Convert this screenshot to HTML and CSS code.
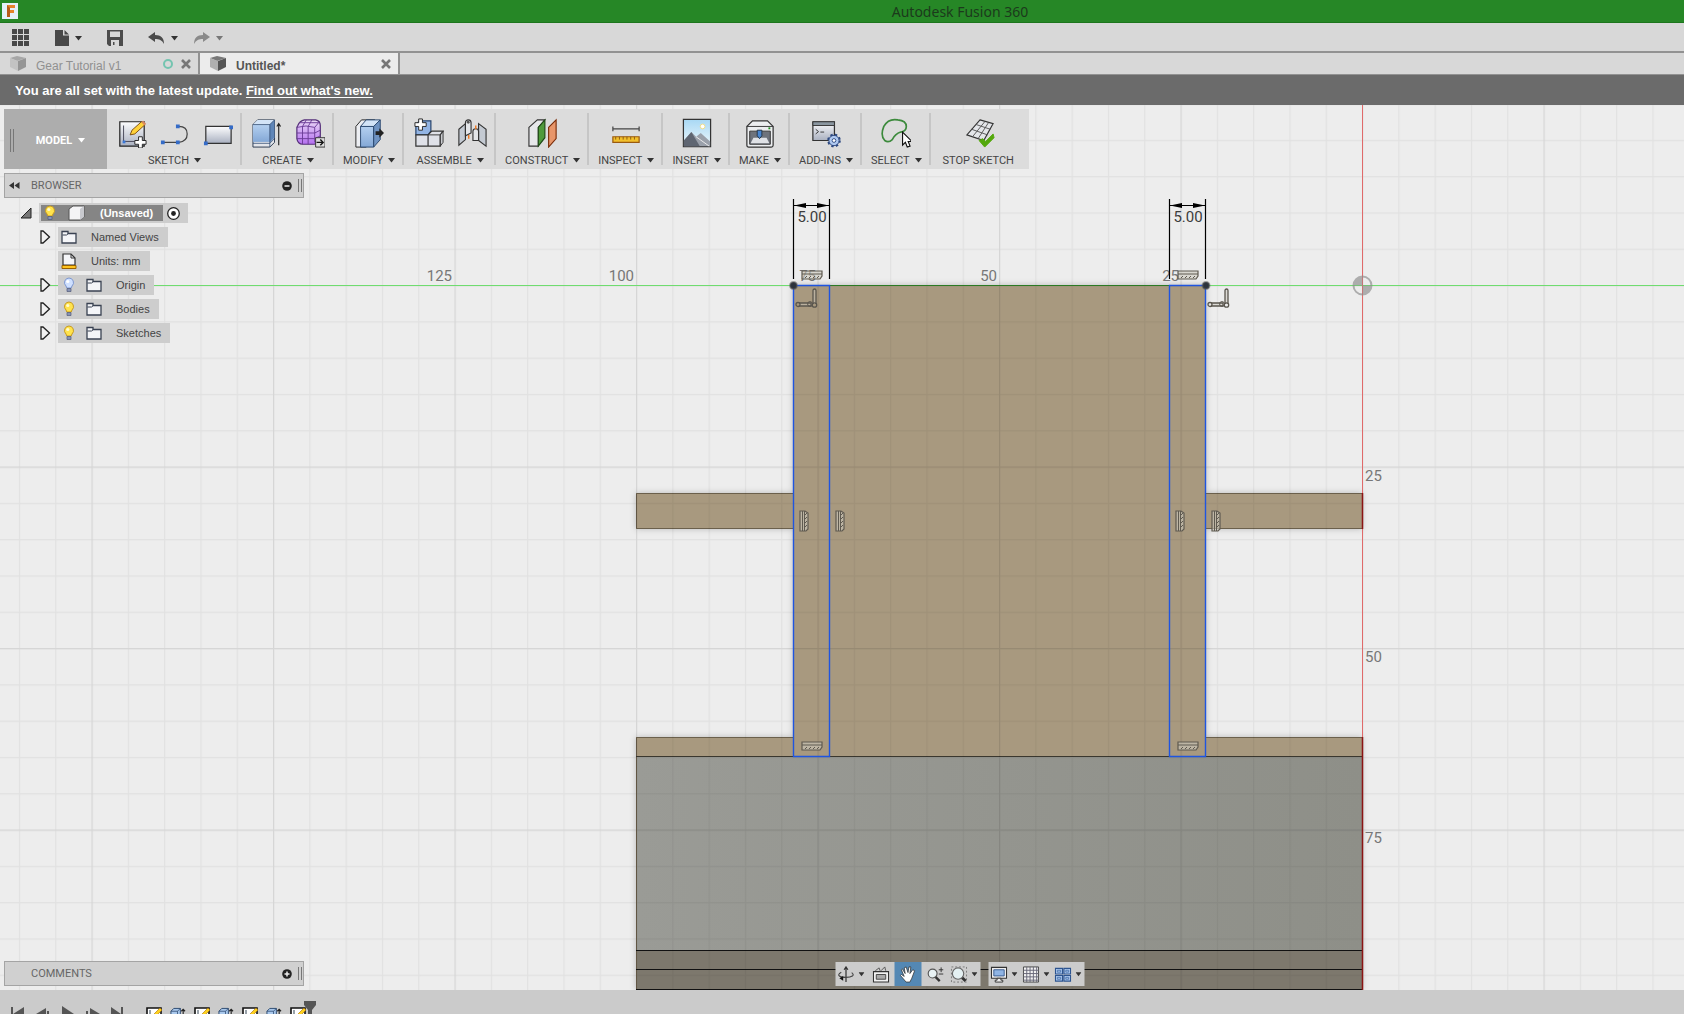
FILE: index.html
```
<!DOCTYPE html>
<html lang="en">
<head>
<meta charset="utf-8">
<title>Autodesk Fusion 360</title>
<link rel="stylesheet" href="styles.css">
</head>
<body>
<svg class="defs" aria-hidden="true">
  <defs>
    <linearGradient id="g-paper" x1="0" y1="0" x2="0" y2="1"><stop offset="0" stop-color="#fdfdfe"/><stop offset="1" stop-color="#a9b0c0"/></linearGradient>
    <linearGradient id="g-blue" x1="0" y1="0" x2="0" y2="1"><stop offset="0" stop-color="#b4d0f0"/><stop offset="1" stop-color="#84a8d6"/></linearGradient>
    <linearGradient id="g-purple" x1="0" y1="0" x2="0" y2="1"><stop offset="0" stop-color="#ead8f6"/><stop offset="1" stop-color="#b46ff0"/></linearGradient>
    <linearGradient id="g-sky" x1="0" y1="0" x2="0" y2="1"><stop offset="0" stop-color="#a8d8f4"/><stop offset="1" stop-color="#eef8fc"/></linearGradient>
    <linearGradient id="g-steel" x1="0" y1="0" x2="1" y2="0"><stop offset="0" stop-color="#9a9b96"/><stop offset="1" stop-color="#8e8f88"/></linearGradient>
    <symbol id="caret" viewBox="0 0 7 5"><path d="M0 0h7L3.5 4.5z" fill="currentColor"/></symbol>
    <symbol id="cube" viewBox="0 0 18 18"><path d="M1 3l7-2 9 2-9 3z" fill="#777"/><path d="M1 3l8 3v10l-8-4z" fill="#b0b0b0"/><path d="M9 6l8-3v9l-8 4z" fill="#555"/></symbol>
    <symbol id="close" viewBox="0 0 10 10"><path d="M1 1l8 8M9 1l-8 8" stroke="#777" stroke-width="2.6"/></symbol>
    <symbol id="folder" viewBox="0 0 16 14"><path d="M1 1.5h6v2h8v9.500h-14z" fill="#f4f5f8" stroke="#3a4252" stroke-width="1.3"/><path d="M1.500 5h4l2-1.500" fill="none" stroke="#3a4252"/></symbol>
    <symbol id="bulb-on" viewBox="0 0 12 16"><path d="M6 1a4.600 4.600 0 0 1 3 8l-.8 2H3.800L3 9A4.600 4.600 0 0 1 6 1z" fill="#ffe34d" stroke="#c79a22"/><circle cx="4.800" cy="4.500" r="1.600" fill="#fffbd0"/><path d="M4 11.500h4v3H4z" fill="#8793b5" stroke="#505a78" stroke-width=".7"/></symbol>
    <symbol id="bulb-off" viewBox="0 0 12 16"><path d="M6 1a4.600 4.600 0 0 1 3 8l-.8 2H3.800L3 9A4.600 4.600 0 0 1 6 1z" fill="#cfe0ff" stroke="#7d97cf"/><circle cx="4.800" cy="4.500" r="1.600" fill="#fff"/><path d="M4 11.500h4v3H4z" fill="#8793b5" stroke="#505a78" stroke-width=".7"/></symbol>
    <symbol id="expand" viewBox="0 0 11 14"><path d="M1 1h2l6.500 6L3 13H1z" fill="#f2f2f2" stroke="#222" stroke-width="1.300"/></symbol>
    <symbol id="tl-sketch" viewBox="0 0 16 16"><path d="M1 1h14v14H1z" fill="#fff" stroke="#111" stroke-width="1.600"/><path d="M4 3v9h9" fill="none" stroke="#345"/><path d="M6 11l1-3 7-7 2 2-7 7z" fill="#ffd21e" stroke="#a66a00" stroke-width=".6"/></symbol>
    <symbol id="tl-extrude" viewBox="0 0 17 16"><path d="M1 4l3-3h7v11l-3 3H1z" fill="#a9c8ec" stroke="#29466e"/><path d="M1 4h7v11M8 4l3-3" fill="none" stroke="#29466e" stroke-width=".8"/><path d="M14 14V2M12 4l2-2 2 2" fill="none" stroke="#222" stroke-width="1.200"/></symbol>
    <symbol id="fix-h" viewBox="0 0 22 10"><path d="M1 1h20v5l-2 3H1z" fill="#ccc8bd" fill-opacity=".6" stroke="#5f5a50" stroke-width="1.200"/><path d="M1 4h20M4 8l2-2M8 8l2-2M12 8l2-2M16 8l2-2" fill="none" stroke="#5f5a50"/></symbol>
    <symbol id="fix-v" viewBox="0 0 10 22"><path d="M1 1h5l3 2v16l-2 2H1z" fill="#ccc8bd" fill-opacity=".6" stroke="#5f5a50" stroke-width="1.200"/><path d="M3.500 1v20M5.500 1v20M6 5l2-2M6 9l2-2M6 13l2-2M6 17l2-2" fill="none" stroke="#5f5a50"/></symbol>
    <symbol id="perp" viewBox="0 0 23 20"><path d="M18 16V2.500a1.500 1.500 0 0 1 3 0v13.500M4 15h12v3H4" fill="#ccc8bd" fill-opacity=".5" stroke="#5a564e" stroke-width="1.300"/><circle cx="3" cy="16.500" r="2" fill="none" stroke="#5a564e" stroke-width="1.300"/><circle cx="15" cy="16" r="2.400" fill="none" stroke="#5a564e"/><circle cx="19.500" cy="17" r="2.200" fill="none" stroke="#5a564e" stroke-width="1.300"/></symbol>
    <symbol id="dim" viewBox="0 0 40 84"><path d="M1.500 1v80M37.500 1v80M2 7.500h36" stroke="#000" stroke-width="1.200" fill="none"/><path d="M2 7.500l12-2.500v5zM37 7.500L25 5v5z"/></symbol>
  </defs>
</svg>

<header class="titlebar">
  <svg class="logo" viewBox="0 0 16 16"><path d="M0 0h16v16H0z" fill="#e4f0f8"/><path d="M5 2h8v3H8v2h4v3H8v4H5z" fill="#e5842a"/><path d="M5 2l3 3v9H5z" fill="#b85a18"/></svg>
  <h1>Autodesk Fusion 360</h1>
</header>

<div class="quickbar">
  <button aria-label="Data panel"><svg width="18" height="18" viewBox="0 0 18 18" fill="#484848"><path d="M0 0h5v5H0zM6 0h5v5H6zM12 0h5v5h-5zM0 6h5v5H0zM6 6h5v5H6zM12 6h5v5h-5zM0 12h5v5H0zM6 12h5v5H6zM12 12h5v5h-5z"/></svg></button>
  <button aria-label="File"><svg width="14" height="16" viewBox="0 0 14 16" fill="#484848"><path d="M0 0h8v5.500h6V16H0zM9.500 0L14 4.500H9.500z"/></svg><svg class="caret"><use href="#caret"/></svg></button>
  <button aria-label="Save"><svg width="16" height="16" viewBox="0 0 16 16"><path d="M0 0h16v16H2l-2-2z" fill="#4c4c4c"/><path d="M3 1.500h10V7H3zM4 10h8v6H4z" fill="#d8d8d8"/><path d="M6 12h1.500v3H6z" fill="#4c4c4c"/></svg></button>
  <span class="history">
    <button aria-label="Undo"><svg width="17" height="13" viewBox="0 0 17 13"><path d="M0 5l7-5v3c6 0 9 3 9 9-2-4-5-5-9-5v3z" fill="#4c4c4c"/></svg><svg class="caret"><use href="#caret"/></svg></button>
    <button class="dim" aria-label="Redo"><svg width="17" height="13" viewBox="0 0 17 13"><path d="M17 5l-7-5v3C4 3 1 6 1 12c2-4 5-5 9-5v3z" fill="#8a8a8a"/></svg><svg class="caret"><use href="#caret"/></svg></button>
  </span>
</div>

<nav class="tabs">
  <div class="tab faded"><svg class="cube"><use href="#cube"/></svg><a href="#gear">Gear Tutorial v1</a><i class="ring"></i><button aria-label="Close Gear Tutorial"><svg width="10" height="10"><use href="#close"/></svg></button></div>
  <div class="tab active"><svg class="cube"><use href="#cube"/></svg><a href="#untitled">Untitled*</a><button aria-label="Close Untitled"><svg width="10" height="10"><use href="#close"/></svg></button></div>
</nav>

<p class="banner">You are all set with the latest update. <a href="#new">Find out what's new.</a></p>

<main class="canvas">
  <svg class="drawing" viewBox="0 105 1684 885" preserveAspectRatio="xMidYMid slice" role="img" aria-label="Sketch view">
    <defs>
      <pattern id="minor" x="1362" y="285" width="36.300" height="36.300" patternUnits="userSpaceOnUse"><path d="M0 0h36.300v1.200H1.200v35.100H0z" fill="#000" fill-opacity=".05"/></pattern>
      <pattern id="major" x="1362" y="285" width="181.500" height="181.500" patternUnits="userSpaceOnUse"><path d="M0 0h181.500v1.200H1.200v180.300H0z" fill="#000" fill-opacity=".05"/></pattern>
      <filter id="soft" x="-5%" y="-10%" width="110%" height="120%"><feDropShadow dx="0" dy="0" stdDeviation="3" flood-opacity=".22"/></filter>
    </defs>
    <path d="M0 105h1684v885H0z" fill="#ededed"/>
    <g filter="url(#soft)">
      <path d="M636 493h726v36H636zM636 737h726v20H636zM793 285h413v471H793z" fill="#a8997f"/>
      <path d="M636 756h726v194H636z" fill="url(#g-steel)"/>
      <path d="M636 950h726v40H636z" fill="#7d786d"/>
    </g>
    <g fill="none" stroke="#6b604c">
      <path d="M793 493.500H636.500v35H793M1206 493.500h156M1206 528.500h156M793 737.500H636.500V990M1206 737.500h156"/>
      <path d="M636 756.500h726" stroke="#3a372e"/>
      <path d="M636 950.500h726M636 969.500h726M636 989.500h726" stroke="#111"/>
    </g>
    <path d="M0 105h1684v885H0z" fill="url(#minor)"/>
    <path d="M0 105h1684v885H0z" fill="url(#major)"/>
    <path d="M0 285.500h1684" stroke="#6fdc6f"/>
    <path d="M794 285.500h412" stroke="#2c7a24"/>
    <path d="M1362.500 105v885" stroke="#e06a6a"/>
    <path d="M1362.500 493v36M1362.500 737v253" stroke="#8c1414" stroke-width="1.500"/>
    <g fill="none" stroke="#1f55e0" stroke-width="1.400"><path d="M793.500 285.500h36v471h-36zM1169.500 285.500h36v471h-36z"/></g>
    <g class="axis" text-anchor="end"><text x="452" y="281">125</text><text x="634" y="281">100</text><text x="816" y="281">75</text><text x="997" y="281">50</text><text x="1179" y="281">25</text></g>
    <g class="axis"><text x="1365" y="481">25</text><text x="1365" y="662">50</text><text x="1365" y="843">75</text></g>
    <use href="#dim" x="792" y="198" width="40" height="84"/><use href="#dim" x="1168" y="198" width="40" height="84"/>
    <g class="measure" text-anchor="middle"><text x="812" y="222">5.00</text><text x="1188" y="222">5.00</text></g>
    <g><use href="#fix-h" x="801" y="270" width="22" height="10"/><use href="#fix-h" x="1177" y="270" width="22" height="10"/><use href="#fix-h" x="801" y="741" width="22" height="10"/><use href="#fix-h" x="1177" y="741" width="22" height="10"/>
    <use href="#fix-v" x="799" y="510" width="10" height="22"/><use href="#fix-v" x="835" y="510" width="10" height="22"/><use href="#fix-v" x="1175" y="510" width="10" height="22"/><use href="#fix-v" x="1211" y="510" width="10" height="22"/>
    <use href="#perp" x="795" y="288" width="23" height="20"/><use href="#perp" x="1207" y="288" width="23" height="20"/></g>
    <g fill="#2c323c" stroke="#555" stroke-opacity=".5" stroke-width="2"><circle cx="793.500" cy="285.500" r="3.500"/><circle cx="1206" cy="285.500" r="3.500"/></g>
    <g fill="#8c8c8c" opacity=".65"><circle cx="1362.500" cy="285.500" r="9" fill="none" stroke="#8c8c8c" stroke-width="2"/><path d="M1362.500 285.500v-9a9 9 0 0 0-9 9zM1362.500 285.500v9a9 9 0 0 0 9-9z"/></g>
  </svg>

  <div class="overlay">
    <div class="toolbar">
      <button class="workspace"><i class="grip"></i><span>MODEL <svg class="caret"><use href="#caret"/></svg></span></button>
      <section class="group">
        <div class="icons">
          <button aria-label="Create sketch"><svg viewBox="0 0 32 32"><path d="M3 4h26v26H3z" fill="url(#g-paper)" stroke="#222" stroke-width="1.300"/><path d="M7 8v17h12" fill="none" stroke="#445"/><path d="M6 24h3v3H6z" fill="#3a78d8"/><path d="M14 18l2-5L26 4l4 3-11 10z" fill="#ffd23a" stroke="#7a4a10"/><path d="M26 4l2-1 3 3-2 2z" fill="#d88860"/><path d="M23 20h4v4h4v4h-4v4h-4v-4h-4v-4h4z" fill="#fff" stroke="#222"/></svg></button>
          <button aria-label="Line"><svg viewBox="0 0 32 32"><path d="M3 26h17q9-1 9-9t-9-8" fill="none" stroke="#444" stroke-width="1.300"/><path d="M1 24h4v4H1zM17 24h4v4h-4zM17 7h4v4h-4z" fill="#356cc8"/></svg></button>
          <button aria-label="Rectangle"><svg viewBox="0 0 32 32"><path d="M3 9h27v18H3z" fill="url(#g-paper)" stroke="#333" stroke-width="1.300"/><path d="M1 25h4v4H1zM28 8h4v4h-4z" fill="#356cc8"/></svg></button>
        </div>
        <button class="label">SKETCH <svg class="caret"><use href="#caret"/></svg></button>
      </section>
      <section class="group">
        <div class="icons">
          <button aria-label="Extrude"><svg viewBox="0 0 32 32"><path d="M1 7l5-5h18v24l-5 5H1z" fill="#e3e5ea" stroke="#29384e"/><path d="M1 7h18v18.500H1z" fill="url(#g-blue)"/><path d="M1 7l5-5h18l-5 5z" fill="#d3e4f7"/><path d="M19 7l5-5v19l-5 5z" fill="#5f86b8"/><path d="M1 7h18v24M1 27h18l5-5M19 7l5-5" fill="none" stroke="#29466e" stroke-width=".8"/><path d="M28.500 29V6M26.500 9l2-3 2 3" fill="none" stroke="#222" stroke-width="1.200"/></svg></button>
          <button aria-label="Form"><svg viewBox="0 0 32 32"><path d="M3 8q2-5 7-6h12q5 1 5 6v13q-1 7-7 7H8q-5 0-6-6V10z" fill="url(#g-purple)" stroke="#56307a" stroke-width="1.300"/><path d="M2 10q10-3 19 0M2 16h19l6-3M2 22h19l6-3M8 28V9l4-7M14 28V9l4-7M21 26V10l5-6M5 5h20" fill="none" stroke="#6b3c96"/><path d="M22 21h10v10H22z" fill="#ddd" stroke="#333"/><path d="M23 26h7M27 23l3 3-3 3" fill="none" stroke="#111" stroke-width="1.500"/></svg></button>
        </div>
        <button class="label">CREATE <svg class="caret"><use href="#caret"/></svg></button>
      </section>
      <section class="group">
        <div class="icons"><button aria-label="Press pull"><svg viewBox="0 0 32 32"><path d="M2 9l6-7h14l-9 7v22H2z" fill="#eceef2" stroke="#222"/><path d="M7 9h14v22H7z" fill="url(#g-blue)" stroke="#29466e"/><path d="M7 9l6-7h15l-7 7z" fill="#d3e4f7" stroke="#29466e"/><path d="M21 9l7-7v21l-7 8z" fill="#6f93c2" stroke="#29466e"/><path d="M23 14h4v-3l5 5-5 5v-3h-4z" fill="#222"/></svg></button></div>
        <button class="label">MODIFY <svg class="caret"><use href="#caret"/></svg></button>
      </section>
      <section class="group">
        <div class="icons">
          <button aria-label="New component"><svg viewBox="0 0 32 32"><path d="M2 7l4-4h12v11l-3 4H2z" fill="#92b4e4" stroke="#29466e" stroke-width="1.300"/><path d="M2 18h13v12H2zM15 18l4-4h12l-3 4v12H15z" fill="#dfe1e8" stroke="#333" stroke-width="1.300"/><path d="M15 18h13l3-4v12l-3 4V18" fill="#b8bbc4" fill-opacity=".5" stroke="#333"/><path d="M5 1h4v4h4v4H9v4H5V9H1V5h4z" fill="#fff" stroke="#222"/></svg></button>
          <button aria-label="Joint"><svg viewBox="0 0 32 32"><path d="M2 12l7-6v17l-7 6zM23 6l8 6v18l-8-6z" fill="#c4cad2" stroke="#333" stroke-width="1.200"/><path d="M9 5a3 3 0 0 1 6 0v11l-6 3zM17 14a3 2.500 0 0 1 6 0v10h-6z" fill="#e3e5e8" stroke="#333" stroke-width="1.200"/><circle cx="12" cy="4.500" r="1.500" fill="#555"/><path d="M12.500 18v4M20 8v4" stroke="#f07820" stroke-width="1.500"/></svg></button>
        </div>
        <button class="label">ASSEMBLE <svg class="caret"><use href="#caret"/></svg></button>
      </section>
      <section class="group">
        <div class="icons"><button aria-label="Offset plane"><svg viewBox="0 0 32 32"><path d="M1 10l9-8h8l-7 8v20H1z" fill="#e6e7ea" stroke="#333" stroke-width="1.200"/><path d="M11 10l7-8v19l-7 9z" fill="#4f9a3c" stroke="#1f4a18" stroke-width="1.200"/><path d="M22 10l8-8v20l-8 9z" fill="#e8966a" stroke="#7a2c08" stroke-width="1.200"/></svg></button></div>
        <button class="label">CONSTRUCT <svg class="caret"><use href="#caret"/></svg></button>
      </section>
      <section class="group">
        <div class="icons"><button aria-label="Measure"><svg viewBox="0 0 32 32"><path d="M2 11.500h28M2 9v5M30 9v5" stroke="#444" stroke-width="1.300"/><path d="M2 20h28v6H2z" fill="#f2c02c" stroke="#9a5a10" stroke-width="1.300"/><path d="M5 20v3M9 20v3M13 20v3M17 20v3M21 20v3M25 20v3" stroke="#8a5a10"/></svg></button></div>
        <button class="label">INSPECT <svg class="caret"><use href="#caret"/></svg></button>
      </section>
      <section class="group">
        <div class="icons"><button aria-label="Insert decal"><svg viewBox="0 0 32 32"><path d="M1.500 1.500h29v29h-29z" fill="url(#g-sky)" stroke="#333" stroke-width="1.300"/><path d="M2 24l8-9 5 5 5-4 10 9v5H2z" fill="#9aa0aa"/><path d="M2 24l8-9 9 15H2z" fill="#5f6672"/><path d="M15 20l14 10" stroke="#eee"/><circle cx="22" cy="9" r="2.500" fill="#fff" stroke="#f0dc80"/></svg></button></div>
        <button class="label">INSERT <svg class="caret"><use href="#caret"/></svg></button>
      </section>
      <section class="group">
        <div class="icons"><button aria-label="3D print"><svg viewBox="0 0 32 32"><path d="M2 9l6-6h16l6 6v20q0 2-2 2H4q-2 0-2-2z" fill="#eceef0" stroke="#333" stroke-width="1.300"/><path d="M2 9h28M5 14h22v14H5z" fill="#6e737c" stroke="#333"/><path d="M9 21h14l3 6H6z" fill="#e0e2e6"/><path d="M13 13h5v6l-2.500 3-2.500-3z" fill="#4a86d0" stroke="#234"/><path d="M25 10h2v2h-2z" fill="#1a8a1a"/></svg></button></div>
        <button class="label">MAKE <svg class="caret"><use href="#caret"/></svg></button>
      </section>
      <section class="group">
        <div class="icons"><button aria-label="Scripts"><svg viewBox="0 0 32 32"><path d="M2 4h23v20H2z" fill="url(#g-paper)" stroke="#333" stroke-width="1.300"/><path d="M2 4h23v4H2z" fill="#8a96a0" stroke="#333"/><path d="M5 12l3 2.500L5 17M10 15h4" fill="none" stroke="#333"/><circle cx="24.500" cy="24" r="5.500" fill="#aec8f0" stroke="#2c4880"/><circle cx="24.500" cy="24" r="6.300" fill="none" stroke="#2c4880" stroke-width="2" stroke-dasharray="2.500 2.500"/><circle cx="24.500" cy="24" r="2" fill="#fff" stroke="#2c4880"/></svg></button></div>
        <button class="label">ADD-INS <svg class="caret"><use href="#caret"/></svg></button>
      </section>
      <section class="group">
        <div class="icons"><button aria-label="Select"><svg viewBox="0 0 32 32"><path d="M4 24Q-1 19 3 9 8 0 18 2q9 1 9 7 0 5-6 6-6 2-9 8-4 4-8 1z" fill="none" stroke="#3c8a3c" stroke-width="1.800"/><path d="M23 15v14l3-3 2 5 3-1-2-5h4z" fill="#fff" stroke="#111" stroke-width="1.200"/></svg></button></div>
        <button class="label">SELECT <svg class="caret"><use href="#caret"/></svg></button>
      </section>
      <section class="group">
        <div class="icons"><button aria-label="Stop sketch"><svg viewBox="0 0 32 32"><path d="M16 2l14 4-10 18L2 18z" fill="#e4e6ea" stroke="#333" stroke-width="1.200"/><path d="M21 4L8 20M25 5L14 22M12 7l15 5M7 12l17 6" stroke="#555" fill="none"/><path d="M15 24l4-2 3 3 8-8 1 4-10 10z" fill="#54a80c" stroke="#54a80c"/></svg></button></div>
        <button class="label">STOP SKETCH</button>
      </section>
    </div>

    <section class="panel"><svg width="11" height="8" viewBox="0 0 11 8"><path d="M5 0v7L0 3.500zM10.500 0v7l-5-3.500z" fill="#333"/></svg><h2>BROWSER</h2><button aria-label="Collapse"><svg width="10" height="10" viewBox="0 0 10 10"><circle cx="5" cy="5" r="4.800" fill="#222"/><path d="M2.500 5h5" stroke="#eee" stroke-width="1.500"/></svg></button><i class="grip"></i></section>

    <ul class="tree">
      <li class="root"><svg width="12" height="12" viewBox="0 0 12 12"><path d="M11 1v10H1z" fill="#777" stroke="#222"/></svg><div class="node"><span class="selected"><svg class="bulb"><use href="#bulb-on"/></svg><svg width="17" height="16" viewBox="0 0 17 16"><path d="M1 4l4-3h11v11l-4 3H1z" fill="#f4f4f6" stroke="#555"/><path d="M12 4l4-3v11l-4 3z" fill="#c8c9ce"/></svg><b>(Unsaved)</b></span><svg width="13" height="13" viewBox="0 0 13 13"><circle cx="6.500" cy="6.500" r="5.800" fill="#fff" stroke="#222" stroke-width="1.300"/><circle cx="6.500" cy="6.500" r="2.400" fill="#222"/></svg></div></li>
      <li><svg class="expand"><use href="#expand"/></svg><div class="node"><svg class="folder"><use href="#folder"/></svg><span>Named Views</span></div></li>
      <li><i class="expand"></i><div class="node"><svg width="16" height="16" viewBox="0 0 16 16"><path d="M2 1h8l4 4v7H2z" fill="#f4f5f8" stroke="#333" stroke-width="1.200"/><path d="M10 1v4h4" fill="none" stroke="#333"/><path d="M1 12.500h14v3H1z" fill="#ffc41e" stroke="#9a6200"/></svg><span>Units: mm</span></div></li>
      <li><svg class="expand"><use href="#expand"/></svg><div class="node"><svg class="bulb"><use href="#bulb-off"/></svg><svg class="folder"><use href="#folder"/></svg><span>Origin</span></div></li>
      <li><svg class="expand"><use href="#expand"/></svg><div class="node"><svg class="bulb"><use href="#bulb-on"/></svg><svg class="folder"><use href="#folder"/></svg><span>Bodies</span></div></li>
      <li><svg class="expand"><use href="#expand"/></svg><div class="node"><svg class="bulb"><use href="#bulb-on"/></svg><svg class="folder"><use href="#folder"/></svg><span>Sketches</span></div></li>
    </ul>

    <section class="panel comments"><h2>COMMENTS</h2><button aria-label="Add comment"><svg width="10" height="10" viewBox="0 0 10 10"><circle cx="5" cy="5" r="4.800" fill="#222"/><path d="M2.500 5h5M5 2.500v5" stroke="#eee" stroke-width="1.500"/></svg></button><i class="grip"></i></section>
  </div>

  <div class="navbar">
    <div class="set">
      <button class="wide" aria-label="Orbit"><svg viewBox="0 0 18 18"><path d="M9 1v16M7 4l2-3 2 3" fill="none" stroke="#333" stroke-width="1.300"/><path d="M4 6.500C-2 10 3 12 9 12s10-2 6-5" fill="none" stroke="#444" stroke-width="1.200"/><path d="M2 13l4-2.500v5z" fill="#111"/></svg><svg class="caret"><use href="#caret"/></svg></button>
      <button aria-label="Look at"><svg viewBox="0 0 18 18"><path d="M1 6h16v11H1z" fill="#f2f2f2" stroke="#333" stroke-width="1.200"/><path d="M4 9h10v5H4z" fill="#aaa" stroke="#444"/><path d="M3 5l4-3 1 3M9 5l4-4 1 4" fill="none" stroke="#555"/></svg></button>
      <button class="on" aria-label="Pan"><svg viewBox="0 0 18 18"><path d="M7 17L1 10l1-1 3 2-3-7 1-1 3 5-1-6 2-1 2 6 1-6h2l-1 7 3-4 2 1-3 8-2 4z" fill="#fff" stroke="#333" stroke-width=".8"/></svg></button>
      <button aria-label="Zoom"><svg viewBox="0 0 18 18"><path d="M9 11l5 5" stroke="#333" stroke-width="2.500"/><circle cx="6.500" cy="8" r="4.700" fill="#e8f2f4" stroke="#555" stroke-width="1.200"/><path d="M13 4h5M15.500 1.500v5M13 8.500h5" stroke="#333"/></svg></button>
      <button class="wide" aria-label="Fit"><svg viewBox="0 0 18 18"><path d="M1 1h16v16H1z" fill="none" stroke="#777" stroke-dasharray="2 2"/><path d="M11 11l5 5" stroke="#333" stroke-width="3"/><circle cx="8" cy="8" r="6" fill="#e4f0f2" stroke="#666" stroke-width="1.200"/></svg><svg class="caret"><use href="#caret"/></svg></button>
    </div>
    <div class="set">
      <button class="wide" aria-label="Display settings"><svg viewBox="0 0 18 18"><path d="M1 1.500h16v11.500H1z" fill="#eee" stroke="#333" stroke-width="1.200"/><path d="M3.500 4h11v6.500h-11z" fill="#8fb4e4" stroke="#3a5c90"/><path d="M7 13h4v2h2v2H5v-2h2z" fill="#eee" stroke="#333"/></svg><svg class="caret"><use href="#caret"/></svg></button>
      <button class="wide" aria-label="Grid"><svg viewBox="0 0 18 18"><path d="M1 1h16v16H1z" fill="#f2f2f2" stroke="#444"/><path d="M4.500 1v16M8 1v16M11.500 1v16M15 1v16M1 4.500h16M1 8h16M1 11.500h16M1 15h16" stroke="#667"/></svg><svg class="caret"><use href="#caret"/></svg></button>
      <button class="wide" aria-label="Viewports"><svg viewBox="0 0 18 18"><path d="M1 2.500h7.500V8.500H1zM10 2.500h7V8.500h-7zM1 10h7.500v6H1zM10 10h7v6h-7z" fill="#a8c4ea" stroke="#2c5490" stroke-width="1.200"/><path d="M3 4.500h3.500v2H3zM12 4.500h3v2h-3zM3 12h3.500v2H3zM12 12h3v2h-3z" fill="none" stroke="#5078b0"/></svg><svg class="caret"><use href="#caret"/></svg></button>
    </div>
  </div>
</main>

<footer class="timeline">
  <div class="player">
    <button aria-label="First"><svg viewBox="0 0 14 14"><path d="M0 0h2v14H0zM13 0v14L2 7z"/></svg></button>
    <button aria-label="Step back"><svg viewBox="0 0 14 14"><path d="M10 1v12L0 7zM11 4h2v10h-2z"/></svg></button>
    <button aria-label="Play"><svg viewBox="0 0 14 14"><path d="M1-1l12 8-12 8z"/></svg></button>
    <button aria-label="Step forward"><svg viewBox="0 0 14 14"><path d="M4 1v12l10-6zM0 4h2v10H0z"/></svg></button>
    <button aria-label="Last"><svg viewBox="0 0 14 14"><path d="M10 0h2v14h-2zM0 0v14l10-7z"/></svg></button>
  </div>
  <div class="features">
    <svg><use href="#tl-sketch"/></svg><svg><use href="#tl-extrude"/></svg><svg><use href="#tl-sketch"/></svg><svg><use href="#tl-extrude"/></svg><svg><use href="#tl-sketch"/></svg><svg><use href="#tl-extrude"/></svg><svg><use href="#tl-sketch"/></svg>
    <svg class="marker" viewBox="0 0 12 14"><path d="M0 0h12v4L8 9v5H4V9L0 4z" fill="#555"/></svg>
  </div>
</footer>
</body>
</html>
```
FILE: styles.css
```
* { box-sizing: border-box; }

body {
  margin: 0;
  height: 100vh;
  display: flex;
  flex-direction: column;
  overflow: hidden;
  background: #cbcbcb;
  font-family: "Liberation Sans", Arial, sans-serif;
  font-size: 11px;
  color: #444;
}

h1, h2, p, ul { margin: 0; padding: 0; font-weight: normal; }
a { color: inherit; text-decoration: none; }
svg { display: block; flex: none; }
button {
  display: flex;
  align-items: center;
  justify-content: center;
  margin: 0;
  padding: 0;
  border: 0;
  background: none;
  font: inherit;
  color: inherit;
}
.defs { position: absolute; width: 0; height: 0; }
.caret { width: 7px; height: 5px; color: #333; }

/* Window title */
.titlebar {
  display: flex;
  align-items: center;
  height: 23px;
  padding: 0 2px;
  background: #268726;
  border-bottom: 1px solid #1d761d;
}
.titlebar h1 {
  flex: 1;
  padding-left: 220px;
  text-align: center;
  font: 14px/22px "Noto Sans", "Open Sans", sans-serif;
  padding-top: 2px;
  color: #1c3a1c;
}
.logo { width: 16px; height: 16px; }

/* Quick access */
.quickbar {
  display: flex;
  align-items: center;
  gap: 25px;
  height: 30px;
  padding: 2px 12px 0;
  background: #d8d8d8;
  border-bottom: 2px solid #929292;
}
.quickbar button { gap: 6px; }
.history { display: flex; gap: 15px; }
.dim .caret { color: #777; }

/* Document tabs */
.tabs {
  display: flex;
  height: 22px;
  background: #d8d8d8;
  border-bottom: 1px solid #929292;
}
.tab {
  display: flex;
  align-items: center;
  width: 200px;
  padding: 0 7px 0 9px;
  border-right: 2px solid #929292;
  font-size: 12px;
}
.tab a { flex: 1; padding: 4px 0 0 9px; }
.tab.active { background: #ececec; font-weight: bold; color: #555; }
.tab.faded { color: #909090; }
.faded .cube { opacity: .5; }
.cube { width: 18px; height: 18px; }
.ring { width: 10px; height: 10px; margin-right: 8px; border: 2px solid #74c4b0; border-radius: 50%; }

.banner {
  height: 30px;
  padding-left: 15px;
  background: #6b6b6b;
  font-size: 13px;
  line-height: 31px;
  font-weight: bold;
  color: #fff;
}
.banner a { text-decoration: underline; text-underline-offset: 2px; }

/* Modelling canvas */
.canvas { position: relative; flex: 1; min-height: 0; overflow: hidden; }
.drawing { position: absolute; inset: 0; width: 100%; height: 100%; }
.axis, .measure { font: 15px Roboto, sans-serif; fill: #777; }
.measure { fill: #3c3c3c; }
.overlay {
  position: absolute;
  inset: 0;
  display: flex;
  flex-direction: column;
  align-items: flex-start;
  gap: 4px;
  padding: 4px;
}

/* Ribbon */
.toolbar {
  display: flex;
  height: 60px;
  background: #dcdcdc;
  font-family: Roboto, sans-serif;
}
.workspace {
  position: relative;
  width: 103px;
  padding: 2px 0 0 10px;
  background: #adadad;
  color: #fff;
  font-weight: bold;
}
.workspace span { display: flex; align-items: center; gap: 6px; }
.workspace .caret { color: #fff; }
.grip {
  width: 4px;
  height: 13px;
  border: solid #777;
  border-width: 0 1px;
}
.workspace .grip { position: absolute; left: 6px; height: 23px; }
.group {
  position: relative;
  display: flex;
  flex-direction: column;
  align-items: center;
  padding: 8px 3px 0;
}
.group:not(:last-child)::after {
  content: "";
  position: absolute;
  right: 0;
  top: 4px;
  width: 2px;
  height: 52px;
  background: #c6c6c6;
}
.icons { display: flex; height: 32px; }
.icons button { width: 43px; }
.icons svg { width: 30px; height: 30px; }
.label { flex: none; gap: 5px; height: 20px; padding: 3px 6px 0; white-space: nowrap; }
.group:last-child .label { padding: 3px 12px 0 9px; }

/* Side panels */
.panel {
  display: flex;
  align-items: center;
  width: 300px;
  height: 25px;
  padding: 0 1px 0 4px;
  background: #d0d0d0;
  border: 1px solid #a4a4a4;
}
.panel h2 { flex: 1; padding-left: 11px; font: 11px Roboto, sans-serif; color: #666; }
.panel .grip { margin-left: 6px; }
.comments { margin-top: auto; }
.comments h2 { padding-left: 22px; }

.tree { list-style: none; padding: 1px 0 0 36px; display: grid; gap: 4px; }
.tree li { display: flex; align-items: center; height: 20px; gap: 7px; }
.tree .root { margin-left: -20px; }
.expand { width: 11px; height: 14px; }
.node {
  display: flex;
  align-items: center;
  height: 20px;
  gap: 14px;
  padding: 0 9px 0 3px;
  background: #cdcdcd;
}
.bulb { width: 12px; height: 16px; margin-left: 2px; margin-right: -3px; }
.folder { width: 16px; height: 14px; }
.root .node { gap: 4px; padding: 0 8px 0 2px; }
.selected {
  display: flex;
  align-items: center;
  gap: 15px;
  height: 16px;
  padding: 0 10px 0 1px;
  background: #858585;
  color: #fff;
}

/* View controls */
.navbar {
  position: absolute;
  left: 57%;
  bottom: 4px;
  display: flex;
  gap: 8px;
  transform: translateX(-50%);
}
.set { display: flex; height: 24px; background: #cccccc; }
.set button { width: 27px; gap: 4px; }
.set .wide { width: 32px; }
.set svg:first-child { width: 17px; height: 17px; }
.set .caret { width: 6px; }
.set .on { background: #5488b4; }

/* Timeline */
.timeline {
  display: flex;
  height: 24px;
  padding: 17px 11px 0;
  overflow: hidden;
  background: #cbcbcb;
}
.player, .features { display: flex; align-items: flex-start; }
.player { gap: 11px; }
.player svg { width: 14px; height: 14px; fill: #555; overflow: visible; }
.features { gap: 8px; margin-left: 21px; }
.features svg { width: 16px; height: 16px; }
.features .marker { width: 12px; height: 14px; margin: -6px 0 0 -10px; }
```
